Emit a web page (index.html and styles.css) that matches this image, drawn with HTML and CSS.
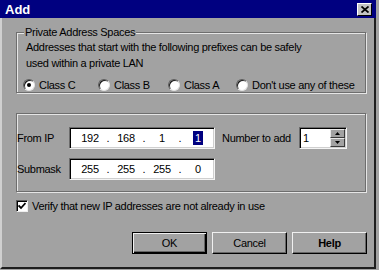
FILE: index.html
```html
<!DOCTYPE html>
<html>
<head>
<meta charset="utf-8">
<link rel="stylesheet" href="styles.css">
</head>
<body>
<div class="window">
  <div class="titlebar">
    <span class="title">Add</span>
    <span class="close"><svg width="8" height="7" viewBox="0 0 8 7"><path d="M0.5 0.5L7.5 6.5M7.5 0.5L0.5 6.5" stroke="#000" stroke-width="1.7" fill="none"/></svg></span>
  </div>
  <div class="frame">
    <div class="group g1">
      <div class="legend">Private Address Spaces</div>
      <p class="desc">Addresses that start with the following prefixes can be safely<br>used within a private LAN</p>
      <div class="radios">
        <div class="opt"><span class="radio on"></span>Class C</div>
        <div class="opt"><span class="radio"></span>Class B</div>
        <div class="opt"><span class="radio"></span>Class A</div>
        <div class="opt"><span class="radio"></span>Don't use any of these</div>
      </div>
    </div>
    <div class="group g2">
      <div class="row">
        <span class="lbl">From IP</span>
        <div class="field ip">
          <span>192</span><span>.</span><span>168</span><span>.</span><span>1</span><span>.</span><span><span class="sel">1</span></span>
        </div>
        <span class="lbl2">Number to add</span>
        <div class="field spin">
          <span class="val">1</span>
          <span class="arrows">
            <span class="arr"><svg width="5" height="3" viewBox="0 0 5 3"><path d="M2.5 0L5 3H0Z" fill="#000"/></svg></span>
            <span class="arr"><svg width="5" height="3" viewBox="0 0 5 3"><path d="M0 0H5L2.5 3Z" fill="#000"/></svg></span>
          </span>
        </div>
      </div>
      <div class="row">
        <span class="lbl">Submask</span>
        <div class="field ip">
          <span>255</span><span>.</span><span>255</span><span>.</span><span>255</span><span>.</span><span>0</span>
        </div>
      </div>
    </div>
    <div class="check">
      <span class="cb"><svg width="8" height="8" viewBox="0 0 8 8"><path d="M0.5 3.5L3 6L7.5 1" stroke="#000" stroke-width="1.8" fill="none"/></svg></span>
      Verify that new IP addresses are not already in use
    </div>
    <div class="buttons">
      <button class="btn default">OK</button>
      <button class="btn">Cancel</button>
      <button class="btn bold">Help</button>
    </div>
  </div>
</div>
</body>
</html>
```

FILE: styles.css
```css
body {
  margin: 0;
  background: #a2a2a2;
  font-family: "Liberation Sans", Arial, sans-serif;
  font-size: 11px;
  letter-spacing: -0.3px;
  color: #000;
}

.window {
  width: 376px;
  height: 269px;
  background: #a2a2a2;
}

.titlebar {
  height: 18px;
  background: #000080;
  display: flex;
  align-items: center;
  justify-content: space-between;
  padding: 0 4px 0 5px;
}

.title {
  color: #fff;
  font-weight: bold;
  font-size: 13px;
  letter-spacing: 0;
}

.close {
  width: 15px;
  height: 13px;
  box-sizing: border-box;
  background: #c4c4c4;
  border: 1px solid;
  border-color: #fff #000 #000 #fff;
  display: flex;
  align-items: center;
  justify-content: center;
}

.frame {
  height: 251px;
  box-sizing: border-box;
  border-left: 2px solid #d0d0d0;
  border-right: 2px solid #1e1e1e;
  border-bottom: 2px solid #1e1e1e;
  padding: 14px 8px 0 14px;
}

.group {
  border: 1px solid #6e6e6e;
  box-shadow: 1px 1px 0 #e6e6e6, inset 1px 1px 0 #e6e6e6;
}

.legend {
  width: max-content;
  margin: -7px 0 0 7px;
  padding: 0 1px;
  line-height: 13px;
  background: #a2a2a2;
}

.desc {
  margin: 0;
  padding-left: 9px;
  line-height: 16px;
}

.radios {
  display: grid;
  grid-template-columns: 75px 70px 68px auto;
  align-items: center;
  height: 14px;
  margin-top: 7px;
  padding-left: 6px;
}

.opt {
  display: flex;
  align-items: center;
  gap: 4px;
  white-space: nowrap;
}

.radio {
  width: 12px;
  height: 12px;
  box-sizing: border-box;
  border-radius: 50%;
  background: #fff;
  border: 1px solid;
  border-color: #5a5a5a #e4e4e4 #e4e4e4 #5a5a5a;
  box-shadow: inset 1px 1px 0 #1a1a1a;
  display: flex;
  align-items: center;
  justify-content: center;
}

.radio.on::after {
  content: "";
  width: 4px;
  height: 4px;
  border-radius: 50%;
  background: #000;
}

.g2 {
  margin-top: 20px;
  padding: 13px 0 11px 0;
  display: flex;
  flex-direction: column;
  gap: 9px;
}

.row {
  display: flex;
  align-items: center;
  height: 22px;
}

.lbl {
  width: 52px;
}

.lbl2 {
  width: 77px;
  margin-left: 7px;
}

.field {
  height: 22px;
  box-sizing: border-box;
  background: #fff;
  border: 1px solid;
  border-color: #6b6b6b #f4f4f4 #f4f4f4 #6b6b6b;
  box-shadow: inset 1px 1px 0 #000, inset -1px -1px 0 #cfcfcf;
}

.ip {
  width: 146px;
  display: grid;
  grid-template-columns: 30px 6px 30px 6px 30px 6px 30px;
  align-items: center;
  text-align: center;
  padding-left: 5px;
}

.sel {
  background: #000080;
  color: #fff;
  padding: 1px 2px;
}

.spin {
  width: 48px;
  display: flex;
  padding: 1px;
}

.val {
  flex: 1;
  padding-left: 2px;
  line-height: 18px;
}

.arrows {
  width: 15px;
  display: flex;
  flex-direction: column;
}

.arr {
  flex: 1;
  box-sizing: border-box;
  background: #a2a2a2;
  border: 1px solid;
  border-color: #e8e8e8 #3a3a3a #3a3a3a #e8e8e8;
  display: flex;
  align-items: center;
  justify-content: center;
}

.check {
  display: flex;
  align-items: center;
  gap: 4px;
  height: 13px;
  margin-top: 7px;
}

.cb {
  width: 12px;
  height: 12px;
  box-sizing: border-box;
  background: #fff;
  border: 1px solid;
  border-color: #5a5a5a #eee #eee #5a5a5a;
  box-shadow: inset 1px 1px 0 #000;
  display: flex;
  align-items: center;
  justify-content: center;
}

.buttons {
  display: flex;
  justify-content: flex-end;
  gap: 5px;
  margin-top: 20px;
  margin-right: -1px;
}

.btn {
  width: 75px;
  height: 22px;
  padding: 0;
  font: inherit;
  letter-spacing: -0.3px;
  color: #000;
  background: #a2a2a2;
  border: 1px solid;
  border-color: #f0f0f0 #000 #000 #f0f0f0;
  box-shadow: inset -1px -1px 0 #666;
}

.btn.default {
  border: 1px solid #000;
  box-shadow: inset 1px 1px 0 #f0f0f0, inset -1px -1px 0 #000, inset -2px -2px 0 #666;
}

.btn.bold {
  font-weight: bold;
}
```
